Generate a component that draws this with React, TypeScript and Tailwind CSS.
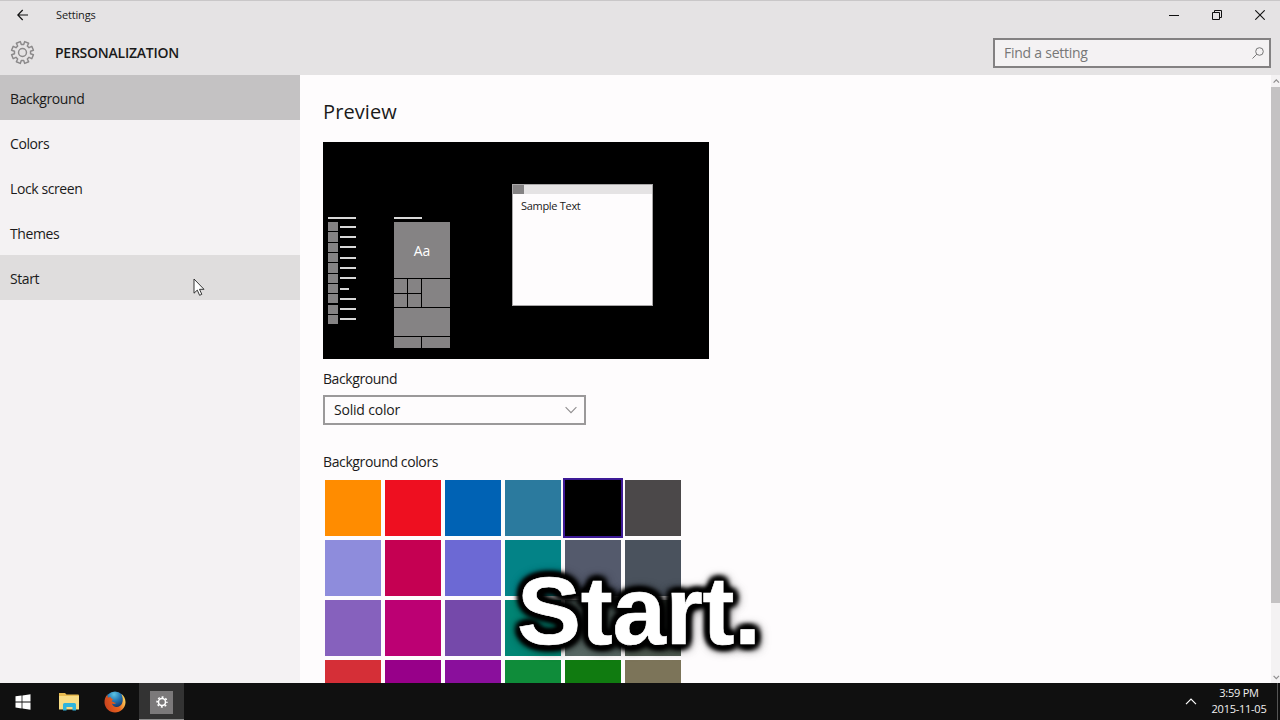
import clsx from 'clsx'

const NAV_ITEMS = ['Background', 'Colors', 'Lock screen', 'Themes', 'Start']

const SWATCHES = [
  'bg-[#ff8c00]', 'bg-[#ee0f20]', 'bg-[#0062b4]', 'bg-[#2b7a9e]', 'bg-black', 'bg-[#4b4849]',
  'bg-[#8e8cdc]', 'bg-[#c50052]', 'bg-[#6c69d4]', 'bg-[#038387]', 'bg-[#545a6c]', 'bg-[#4a525d]',
  'bg-[#8661bd]', 'bg-[#bc0073]', 'bg-[#7549aa]', 'bg-[#018574]', 'bg-[#5a6a66]', 'bg-[#525e54]',
  'bg-[#d52f37]', 'bg-[#970089]', 'bg-[#8a0f9c]', 'bg-[#0f8c3a]', 'bg-[#107b10]', 'bg-[#7c7459]',
]
const SELECTED_SWATCH = 4

// Outline of a cog: eight teeth, each a short flat top between two valleys.
function cogPath(outer: number, inner: number) {
  const point = (radius: number, deg: number) => {
    const rad = (deg * Math.PI) / 180
    return `${(radius * Math.cos(rad)).toFixed(2)} ${(radius * Math.sin(rad)).toFixed(2)}`
  }
  const points: string[] = []
  for (let i = 0; i < 8; i++) {
    const mid = i * 45 + 22.5
    points.push(point(inner, mid - 14), point(outer, mid - 11), point(outer, mid + 11), point(inner, mid + 14))
  }
  return `M${points.join('L')}Z`
}

function GearIcon({ className }: { className?: string }) {
  return (
    <svg viewBox="-12 -12 24 24" className={className} fill="none" stroke="currentColor" strokeWidth="1.4" strokeLinejoin="round">
      <path d={cogPath(10.7, 7.8)} />
      <circle r="3.8" />
    </svg>
  )
}

function TitleBar() {
  return (
    <div className="flex h-[29px] items-center justify-between pb-px">
      <div className="flex items-center">
        <svg width="12" height="12" viewBox="0 0 12 12" className="ml-[17px]" fill="none" stroke="#111" strokeWidth="1.2">
          <path d="M11 6H1M5.7 1L0.8 6l4.9 5" />
        </svg>
        <span className="ml-[27px] text-[11px] leading-4 tracking-[-0.15px]">Settings</span>
      </div>
      <div className="mr-[15px] flex items-center gap-[33px] text-[#111]">
        <svg width="10" height="10" viewBox="0 0 10 10" stroke="currentColor">
          <path d="M0 5.5h10" />
        </svg>
        <svg width="10" height="10" viewBox="0 0 10 10" fill="none" stroke="currentColor">
          <path d="M0.5 2.5h7v7h-7zM2.5 2.5v-2h7v7h-2" />
        </svg>
        <svg width="10" height="10" viewBox="0 0 10 10" fill="none" stroke="currentColor" strokeWidth="1.1">
          <path d="M0.3 0.3l9.4 9.4M9.7 0.3L0.3 9.7" />
        </svg>
      </div>
    </div>
  )
}

function Header() {
  return (
    <header className="h-[75px] shrink-0 border-t border-[#c9c7c8] bg-[#e5e3e4]">
      <TitleBar />
      <div className="flex h-[45px] items-center">
        <GearIcon className="ml-[10px] size-[25px] text-[#8b898a]" />
        <h1 className="ml-5 pt-px text-sm font-semibold tracking-[-0.25px]">PERSONALIZATION</h1>
        <div className="mr-[9px] ml-auto flex h-[30px] w-[278px] items-center justify-between border-2 border-[#838182] bg-[#f4f2f3] pr-[5px] pl-[9px] text-sm text-[#777]">
          <span className="tracking-[-0.25px]">Find a setting</span>
          <svg width="12" height="12" viewBox="0 0 12 12" fill="none" stroke="currentColor">
            <circle cx="7.5" cy="4.5" r="3.8" />
            <path d="M4.8 7.2L0.5 11.5" />
          </svg>
        </div>
      </div>
    </header>
  )
}

function Sidebar() {
  return (
    <nav className="w-[300px] shrink-0 bg-[#f4f2f3]">
      {NAV_ITEMS.map((item) => (
        <div
          key={item}
          className={clsx(
            'flex h-[45px] items-center pt-[2px] pl-[10px] text-sm tracking-[-0.4px]',
            item === 'Background' && 'bg-[#c4c2c3]',
            item === 'Start' && 'bg-[#dfdddd]',
          )}
        >
          {item}
        </div>
      ))}
    </nav>
  )
}

function StartMenuPreview() {
  return (
    <div className="flex pt-[75px] pl-[5px]">
      <div className="w-[28px]">
        <div className="mb-[3px] h-[2px] bg-[#d8d8d8]" />
        <div className="flex flex-col gap-[1.03px]">
          {Array.from({ length: 10 }, (_, i) => (
            <div key={i} className="flex h-[9.3px] items-center gap-[2px]">
              <div className="h-full w-[10px] bg-[#858384]" />
              <div className={clsx('h-[2px] bg-[#d8d8d8]', i === 6 ? 'w-[9px]' : 'w-4')} />
            </div>
          ))}
        </div>
      </div>
      <div className="ml-[38px] w-[56px]">
        <div className="mb-[3px] h-[2px] w-[28px] bg-[#d8d8d8]" />
        <div className="flex flex-col gap-px">
          <div className="flex h-[56px] items-center justify-center bg-[#858384] pt-px text-sm text-white">Aa</div>
          <div className="flex h-[28px] gap-px">
            <div className="grid w-[27px] grid-cols-2 gap-px">
              <div className="bg-[#858384]" />
              <div className="bg-[#858384]" />
              <div className="bg-[#858384]" />
              <div className="bg-[#858384]" />
            </div>
            <div className="flex-1 bg-[#858384]" />
          </div>
          <div className="h-[28px] bg-[#858384]" />
          <div className="flex h-[11px] gap-px">
            <div className="w-[27px] bg-[#858384]" />
            <div className="flex-1 bg-[#858384]" />
          </div>
        </div>
      </div>
    </div>
  )
}

function DesktopPreview() {
  return (
    <div className="mt-[16px] flex h-[217px] w-[386px] bg-black">
      <StartMenuPreview />
      <div className="mt-[42px] ml-[62px] h-[122px] w-[141px] border border-[#a9a7a8] bg-[#fefcfd]">
        <div className="h-[9px] bg-[#e5e3e4]">
          <div className="h-full w-[11px] bg-[#858384]" />
        </div>
        <div className="mt-[4px] ml-[8px] text-[11px] leading-4 tracking-[-0.3px]">Sample Text</div>
      </div>
    </div>
  )
}

function Scrollbar() {
  return (
    <div className="flex w-[9px] shrink-0 flex-col items-center justify-between bg-[#f4f2f3] text-[#8f8d8e]">
      <svg width="9" height="12" viewBox="0 0 9 12" fill="none" stroke="currentColor" strokeWidth="1.2">
        <path d="M2.6 7.6L5.3 4.9l2.7 2.7" />
      </svg>
      <div className="mb-auto h-[516px] w-full bg-[#c4c2c3]" />
      <svg width="9" height="12" viewBox="0 0 9 12" fill="none" stroke="currentColor" strokeWidth="1.2">
        <path d="M2.6 4.9l2.7 2.7L8 4.9" />
      </svg>
    </div>
  )
}

function Content() {
  return (
    <main className="min-w-0 flex-1 overflow-hidden pt-[23px] pl-[23px]">
      <h2 className="text-xl leading-7 tracking-[0.1px]">Preview</h2>
      <DesktopPreview />
      <div className="mt-[10px] text-sm leading-5 tracking-[-0.42px]">Background</div>
      <div className="mt-[6px] flex h-[30px] w-[263px] items-center justify-between border-2 border-[#9b999a] pr-[7px] pl-[9px] text-sm">
        <span className="tracking-[-0.2px]">Solid color</span>
        <svg width="12" height="8" viewBox="0 0 12 8" fill="none" stroke="#8f8d8e" strokeWidth="1.1">
          <path d="M0.6 1.2L6 6.6l5.4-5.4" />
        </svg>
      </div>
      <div className="mt-[27px] text-sm leading-5 tracking-[-0.38px]">Background colors</div>
      <div className="mt-[6px] grid w-[360px] grid-cols-6">
        {SWATCHES.map((color, i) => (
          <div key={color} className={clsx('size-[60px] p-[2px]', i === SELECTED_SWATCH && 'bg-[#3d1a96]')}>
            <div className={clsx('size-full', color)} />
          </div>
        ))}
      </div>
    </main>
  )
}

function FolderIcon() {
  return (
    <svg width="22" height="20" viewBox="0 0 22 20">
      <path d="M1 1h6l1.5 1.5H20a1 1 0 0 1 1 1v13.500H1z" fill="#e8bb50" />
      <path d="M1 4h20v13.500H1z" fill="#f8dc84" />
      <path d="M5 18.500v-6a1.500 1.500 0 0 1 1.500-1.500h10a1.500 1.500 0 0 1 1.500 1.500v6h-3.500V15h-6v3.500z" fill="#2fb4dc" />
    </svg>
  )
}

function FirefoxIcon() {
  return (
    <svg width="22" height="22" viewBox="0 0 22 22">
      <defs>
        <radialGradient id="globe" cx="0.45" cy="0.15" r="0.7">
          <stop offset="0" stopColor="#5cc4e4" />
          <stop offset="0.5" stopColor="#2377b4" />
          <stop offset="1" stopColor="#123468" />
        </radialGradient>
        <linearGradient id="fox" x1="0" y1="0.6" x2="1" y2="0.3">
          <stop offset="0" stopColor="#c9421f" />
          <stop offset="0.6" stopColor="#e8641e" />
          <stop offset="1" stopColor="#fbd860" />
        </linearGradient>
      </defs>
      <circle cx="11" cy="10" r="9.6" fill="url(#globe)" />
      <path
        d="M3.500 3.500C1.300 5.500 0.300 8.500 0.500 12c0.700 5.400 5 9.500 10.500 9.500S21.500 17 21.500 11.200c0-3.400-1.500-6.400-4.200-8.300 1.400 2.600 2.200 6.300 0.700 9.600-1.300 2.700-4.100 4-6.900 3.200-1.900-0.600-3-1.900-3-3.200 1.300 0.700 2.900 0.400 4-0.600-1.800-0.200-2.700-1.500-4.400-1.500 0-1 0.800-1.500 1.500-2C8.100 8 6.900 7.300 6.500 6 5.500 6 4.700 6.200 4 6.700 3.500 5.700 3.400 4.600 3.500 3.500z"
        fill="url(#fox)"
      />
    </svg>
  )
}

function Taskbar() {
  return (
    <footer className="flex h-[37px] shrink-0 items-stretch bg-[#101010] text-[#f0f0f0]">
      <div className="flex w-[45px] items-center justify-center">
        <svg width="16" height="16" viewBox="0 0 16 16" fill="#fff">
          <path d="M0.5 2.3L6.6 1.5V7.5H0.5zM7.4 1.4L15.5 0.3V7.5H7.4zM0.5 8.4H6.6V14.4L0.5 13.6zM7.4 8.400H15.500V15.700L7.400 14.600z" />
        </svg>
      </div>
      <div className="flex w-[47px] items-center justify-center">
        <FolderIcon />
      </div>
      <div className="flex w-[47px] items-center justify-center pr-px">
        <FirefoxIcon />
      </div>
      <div className="flex w-[45px] items-center justify-center border-b border-[#8d8d8d] bg-[#333]">
        <div className="mt-[2px] flex size-[23px] items-center justify-center bg-[#7b797a]">
          <svg width="12" height="12" viewBox="-6 -6 12 12" fill="none" stroke="#fff">
            <circle r="3.5" strokeWidth="1.5" />
            <circle r="4.9" strokeWidth="1.6" strokeDasharray="1.9 1.948" strokeDashoffset="0.95" />
          </svg>
        </div>
      </div>
      <div className="ml-auto flex items-center">
        <svg width="12" height="7" viewBox="0 0 12 7" fill="none" stroke="#fff" strokeWidth="1.2">
          <path d="M1 6.2L6 1.2l5 5" />
        </svg>
        <div className="ml-[14px] w-[56px] pb-px text-center text-[11px] leading-4 tracking-[-0.25px] whitespace-nowrap">
          <div>3:59 PM</div>
          <div>2015-11-05</div>
        </div>
        <div className="ml-[10px] h-full w-[3px] border-l border-[#555]" />
      </div>
    </footer>
  )
}

function Cursor() {
  return (
    <svg width="12" height="19" viewBox="0 0 12 19" className="absolute top-[278px] left-[193px]">
      <path
        d="M1 1v14.200l3.300-3.100 2.300 5.200 2.200-1-2.300-5H11z"
        fill="#fff"
        stroke="#222"
        strokeWidth="0.9"
      />
    </svg>
  )
}

function Caption() {
  return (
    <div className="absolute top-[556px] left-[517px] font-['Liberation_Sans',sans-serif] text-[96px] leading-[110px] font-bold tracking-[-0.3px] whitespace-nowrap text-white [-webkit-text-stroke:0.6px_#fff] [text-shadow:5px_0_5px_#000,-5px_0_5px_#000,0_5px_5px_#000,0_-5px_5px_#000,4px_4px_5px_#000,-4px_4px_5px_#000,4px_-4px_5px_#000,-4px_-4px_5px_#000,1px_1px_12px_#000,1px_1px_14px_#000]">
      Start.
    </div>
  )
}

export default function App() {
  return (
    <div className="relative flex h-[720px] w-[1280px] flex-col overflow-hidden bg-[#fefcfd] font-['Open_Sans','Noto_Sans',sans-serif] text-[#1a1a1a]">
      <Header />
      <div className="flex min-h-0 flex-1">
        <Sidebar />
        <Content />
        <Scrollbar />
      </div>
      <Taskbar />
      <Cursor />
      <Caption />
    </div>
  )
}
